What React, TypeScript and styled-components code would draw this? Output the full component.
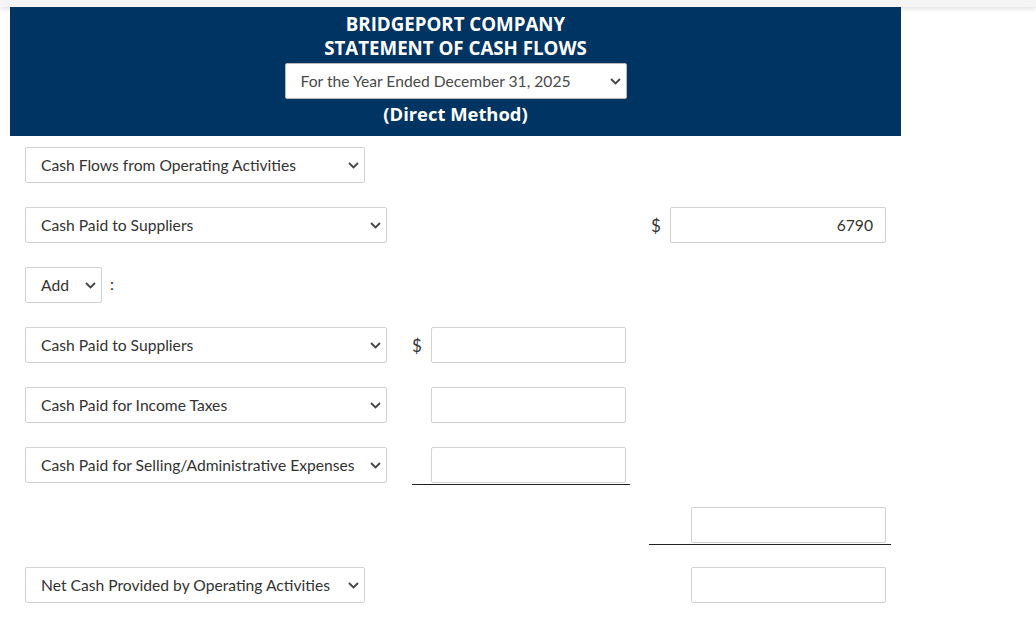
import React from "react";
import styled, { createGlobalStyle } from "styled-components";

const Global = createGlobalStyle`
  html, body { margin: 0; padding: 0; background: #fff; }
  body { font-family: Lato, "Open Sans", sans-serif; color: #333; }
`;

const TopStrip = styled.div`
  height: 7px;
  background: #f5f5f5;
  box-shadow: 0 2px 5px rgba(0, 0, 0, 0.12);
`;

const Page = styled.div`
  padding-left: 10px;
  width: 891px;
`;

const Header = styled.header`
  background: #003462;
  height: 129px;
  box-sizing: border-box;
  padding-top: 5px;
  display: flex;
  flex-direction: column;
  align-items: center;
  color: #fff;
`;

const Title = styled.div`
  font-family: "Open Sans", Lato, sans-serif;
  font-weight: 700;
  font-size: 18.7px;
  line-height: 24px;
`;

const HeaderSelectWrap = styled.div`
  margin-top: 3px;
  margin-bottom: 3px;
`;

const Subtitle = styled.div`
  font-family: "Open Sans", Lato, sans-serif;
  font-weight: 700;
  font-size: 18.4px;
  line-height: 24px;
`;

const Body = styled.main`
  display: grid;
  grid-template-columns: 362px 25px 218px 19px 242px;
  grid-auto-rows: 36px;
  row-gap: 24px;
  padding: 11px 0 0 25px;
`;

const SelectBox = styled.div<{ $w: number; $dark?: boolean }>`
  width: ${(p) => p.$w}px;
  height: 36px;
  box-sizing: border-box;
  background: #fff;
  border: 1px solid ${(p) => (p.$dark ? "#bbb" : "#d2d2d2")};
  border-radius: 2px;
  display: flex;
  align-items: center;
  justify-content: space-between;
  padding: 0 5px 0 15px;
  font-size: 15.65px;
  color: ${(p) => (p.$dark ? "#4a4a4a" : "#333")};
  white-space: nowrap;
`;

const Chevron = () => (
  <svg width="11" height="7" viewBox="0 0 11 7" fill="none">
    <polyline points="1,1 5.5,5.5 10,1" stroke="#444" strokeWidth="1.8" />
  </svg>
);

const LabelCell = styled.div<{ $row: number }>`
  grid-column: 1;
  grid-row: ${(p) => p.$row};
  display: flex;
  align-items: center;
  gap: 8px;
`;

const Colon = styled.span`
  font-size: 15.65px;
  color: #333;
  padding-bottom: 3px;
`;

const AmountCell = styled.div<{ $col: number; $row: number; $under?: boolean; $pad: number }>`
  grid-column: ${(p) => p.$col};
  grid-row: ${(p) => p.$row};
  position: relative;
  display: flex;
  align-items: center;
  padding-left: ${(p) => p.$pad}px;
  ${(p) =>
    p.$under
      ? `&::after {
    content: "";
    position: absolute;
    left: 0;
    right: 0;
    bottom: -2px;
    height: 1px;
    background: #222;
  }`
      : ""}
`;

const Dollar = styled.span`
  width: 19px;
  margin-left: -19px;
  font-size: 17px;
  color: #333;
  box-sizing: border-box;
`;

const Amount = styled.div<{ $w: number }>`
  width: ${(p) => p.$w}px;
  height: 36px;
  box-sizing: border-box;
  border: 1px solid #d2d2d2;
  border-radius: 2px;
  background: #fff;
  display: flex;
  align-items: center;
  justify-content: flex-end;
  padding-right: 12px;
  font-size: 15.65px;
  color: #333;
`;

const Sel = ({ text, w }: { text: string; w: number }) => (
  <SelectBox $w={w}>
    <span>{text}</span>
    <Chevron />
  </SelectBox>
);

export default function App() {
  return (
    <>
      <Global />
      <TopStrip />
      <Page>
        <Header>
          <Title>BRIDGEPORT COMPANY</Title>
          <Title>STATEMENT OF CASH FLOWS</Title>
          <HeaderSelectWrap>
            <SelectBox $w={342} $dark>
              <span>For the Year Ended December 31, 2025</span>
              <Chevron />
            </SelectBox>
          </HeaderSelectWrap>
          <Subtitle>(Direct Method)</Subtitle>
        </Header>
      </Page>
      <Body>
        <LabelCell $row={1}>
          <Sel text="Cash Flows from Operating Activities" w={340} />
        </LabelCell>

        <LabelCell $row={2}>
          <Sel text="Cash Paid to Suppliers" w={362} />
        </LabelCell>
        <AmountCell $col={5} $row={2} $pad={21}>
          <Dollar>$</Dollar>
          <Amount $w={216}>6790</Amount>
        </AmountCell>

        <LabelCell $row={3}>
          <Sel text="Add" w={77} />
          <Colon>:</Colon>
        </LabelCell>

        <LabelCell $row={4}>
          <Sel text="Cash Paid to Suppliers" w={362} />
        </LabelCell>
        <AmountCell $col={3} $row={4} $pad={19}>
          <Dollar>$</Dollar>
          <Amount $w={195} />
        </AmountCell>

        <LabelCell $row={5}>
          <Sel text="Cash Paid for Income Taxes" w={362} />
        </LabelCell>
        <AmountCell $col={3} $row={5} $pad={19}>
          <Amount $w={195} />
        </AmountCell>

        <LabelCell $row={6}>
          <Sel text="Cash Paid for Selling/Administrative Expenses" w={362} />
        </LabelCell>
        <AmountCell $col={3} $row={6} $pad={19} $under>
          <Amount $w={195} />
        </AmountCell>

        <AmountCell $col={5} $row={7} $pad={42} $under>
          <Amount $w={195} />
        </AmountCell>

        <LabelCell $row={8}>
          <Sel text="Net Cash Provided by Operating Activities" w={340} />
        </LabelCell>
        <AmountCell $col={5} $row={8} $pad={42}>
          <Amount $w={195} />
        </AmountCell>
      </Body>
    </>
  );
}
